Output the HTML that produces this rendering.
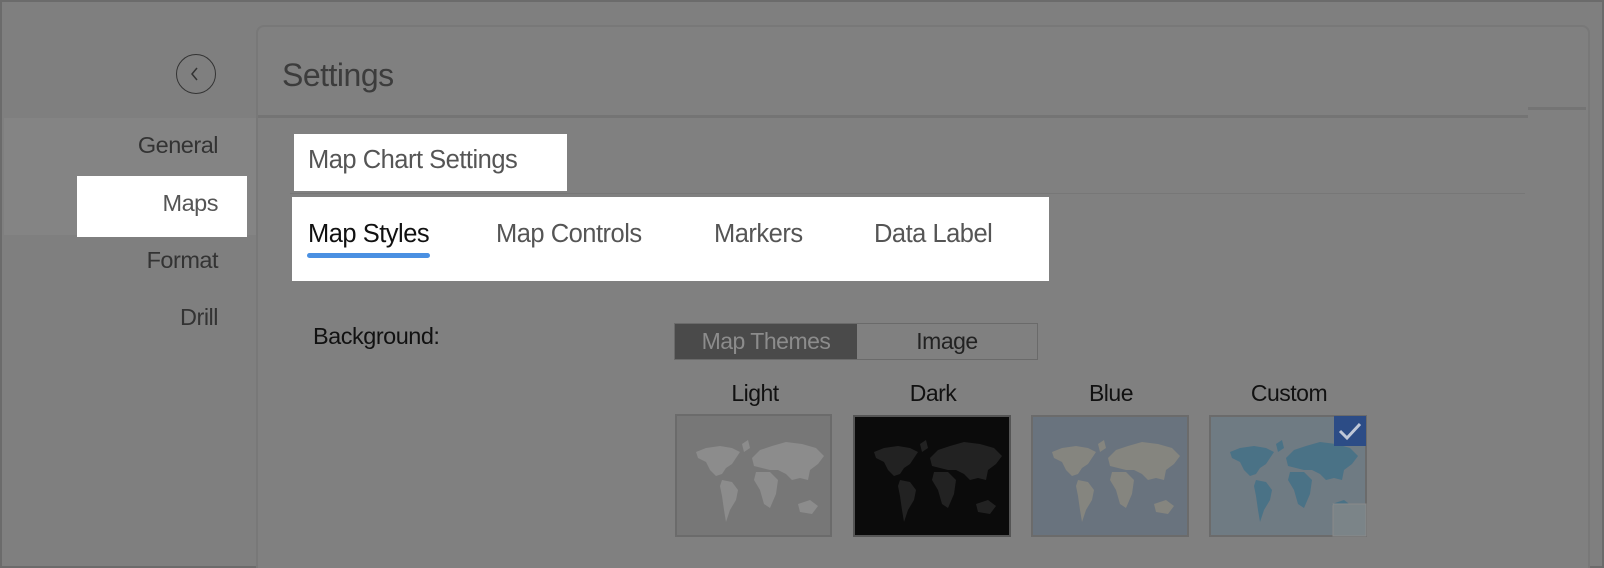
<!DOCTYPE html>
<html style="overflow:hidden"><head><meta charset="utf-8"><style>
html,body{margin:0;width:1604px;height:568px;overflow:hidden}
body{background:#7f7f7f;font-family:"Liberation Sans",sans-serif;position:relative}
.a{position:absolute}
.t{position:absolute;white-space:nowrap;letter-spacing:-0.5px}
</style></head><body>
<div class="a" style="left:0;top:0;width:1600px;height:564px;border:2px solid #6b6b6b"></div>
<div class="a" style="left:4px;top:118px;width:252px;height:117px;background:#848484"></div>
<div class="a" style="left:256px;top:25px;width:1330px;height:541px;border:2px solid #787878;border-bottom:none;border-radius:8px 8px 0 0;background:#808080"></div>
<div class="a" style="left:258px;top:115px;width:1270px;height:3px;background:#747474"></div>
<div class="a" style="left:1528px;top:107px;width:58px;height:3px;background:#747474"></div>
<div class="a" style="left:290px;top:193px;width:1235px;height:1px;background:#777"></div>
<div class="a" style="left:176px;top:54px;width:38px;height:38px;border:1.5px solid #333;border-radius:50%"></div>
<svg class="a" style="left:187px;top:66px" width="16" height="16"><path d="M10 2 L5 8 L10 14" fill="none" stroke="#333" stroke-width="1.5"/></svg>
<div class="t" style="left:282px;top:57px;font-size:32px;color:#3c3c3c">Settings</div>
<div class="t" style="right:1386px;top:132px;font-size:23.5px;color:#333">General</div>
<div class="a" style="left:77px;top:176px;width:170px;height:61px;background:#fff"></div>
<div class="t" style="right:1386px;top:190px;font-size:23.5px;color:#555">Maps</div>
<div class="t" style="right:1386px;top:247px;font-size:23.5px;color:#333">Format</div>
<div class="t" style="right:1386px;top:304px;font-size:23.5px;color:#333">Drill</div>
<div class="a" style="left:294px;top:134px;width:273px;height:57px;background:#fff"></div>
<div class="t" style="left:308px;top:146px;font-size:25.5px;color:#555">Map Chart Settings</div>
<div class="a" style="left:292px;top:197px;width:757px;height:84px;background:#fff"></div>
<div class="t" style="left:308px;top:220px;font-size:25.5px;color:#111">Map Styles</div>
<div class="a" style="left:307px;top:253px;width:123px;height:5px;border-radius:3px;background:#4a90e2"></div>
<div class="t" style="left:496px;top:220px;font-size:25.5px;color:#555">Map Controls</div>
<div class="t" style="left:714px;top:220px;font-size:25.5px;color:#555">Markers</div>
<div class="t" style="left:874px;top:220px;font-size:25.5px;color:#555">Data Label</div>
<div class="t" style="left:313px;top:323px;font-size:23.5px;color:#111">Background:</div>
<div class="a" style="left:674px;top:323px;width:362px;height:35px;border:1px solid #6a6a6a;background:#808080"></div>
<div class="a" style="left:675px;top:324px;width:182px;height:35px;background:#4a4a4a"></div>
<div class="t" style="left:675px;top:328px;width:182px;text-align:center;font-size:23px;color:#8c8c8c">Map Themes</div>
<div class="t" style="left:857px;top:328px;width:180px;text-align:center;font-size:23px;color:#222">Image</div>
<div class="t" style="left:676px;top:380px;width:158px;text-align:center;font-size:23px;color:#111">Light</div>
<div class="t" style="left:854px;top:380px;width:158px;text-align:center;font-size:23px;color:#111">Dark</div>
<div class="t" style="left:1032px;top:380px;width:158px;text-align:center;font-size:23px;color:#111">Blue</div>
<div class="t" style="left:1210px;top:380px;width:158px;text-align:center;font-size:23px;color:#111">Custom</div>
<svg class="a" style="left:0;top:0" width="1604" height="568">
<defs><g id="w">
<path d="M10 34 L20 30 L34 28 L46 30 L54 34 L50 40 L46 46 L40 50 L36 56 L30 58 L24 52 L20 44 L12 40 Z"/>
<path d="M36 62 L46 64 L52 72 L50 82 L44 92 L40 104 L38 92 L36 78 L34 68 Z"/>
<path d="M56 26 L62 22 L64 30 L58 34 Z"/>
<path d="M66 40 L74 32 L86 28 L100 24 L116 26 L130 30 L138 38 L132 46 L124 52 L122 62 L114 60 L106 62 L100 56 L92 52 L84 52 L76 50 L68 48 Z"/>
<path d="M70 54 L84 54 L92 62 L90 76 L84 90 L78 86 L74 72 L68 62 Z"/>
<path d="M112 86 L124 82 L132 88 L126 96 L114 94 Z"/>
</g></defs>
<rect x="676" y="415" width="155" height="121" fill="#777" stroke="#6b6b6b" stroke-width="2"/>
<use href="#w" x="686" y="418" fill="#8c8c8c"/>
<rect x="854" y="416" width="156" height="120" fill="#0b0b0b" stroke="#555" stroke-width="2"/>
<use href="#w" x="864" y="418" fill="#222"/>
<rect x="1032" y="416" width="156" height="120" fill="#69737e" stroke="#6b6b6b" stroke-width="2"/>
<use href="#w" x="1042" y="418" fill="#85857f"/>
<rect x="1210" y="416" width="156" height="120" fill="#6f7b83" stroke="#6b6b6b" stroke-width="2"/>
<use href="#w" x="1220" y="418" fill="#4a7286"/>
<rect x="1334" y="416" width="32" height="30" fill="#2c4c86"/>
<path d="M1340 431 L1347 438 L1360 424" fill="none" stroke="#c0c8d8" stroke-width="3"/>
<rect x="1333" y="504" width="33" height="32" fill="#7b8488" stroke="#8a8a8a"/>
</svg>
</body></html>
